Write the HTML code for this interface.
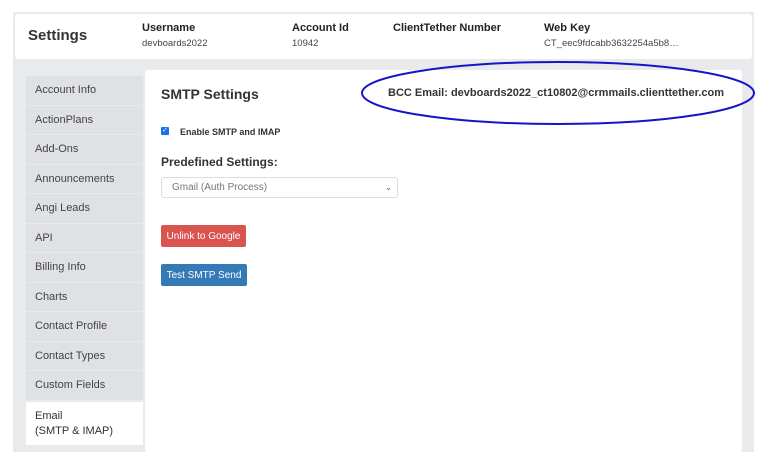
<!DOCTYPE html>
<html><head><meta charset="utf-8"><style>
*{box-sizing:border-box;margin:0;padding:0}
body{width:768px;height:464px;background:#fff;font-family:"Liberation Sans",Arial,sans-serif;position:relative;overflow:hidden;color:#333}
.outer{position:absolute;left:13px;top:12px;width:741px;height:440px;background:#e9eaec}
.header{position:absolute;left:15px;top:14px;width:737px;height:45px;background:#fff;border-radius:3px}
.h1{position:absolute;left:28px;top:27px;font-size:15px;font-weight:bold;color:#333}
.lab{position:absolute;top:22px;font-size:11px;font-weight:bold;color:#222}
.val{position:absolute;top:38px;font-size:9.5px;color:#444}
.side{position:absolute;left:26px;width:117px;background:#dfe1e4;font-size:11px;color:#444;padding-left:9px}
.card{position:absolute;left:145px;top:70px;width:597px;height:382px;background:#fff;border-radius:3px}
.t{position:absolute;font-size:14px;font-weight:bold;color:#333}
.btn{position:absolute;color:#fff;font-size:10px;border-radius:2px;display:flex;align-items:center;justify-content:center}
</style></head><body>
<div class="outer"></div>
<div class="header"></div>
<div class="h1">Settings</div>
<div class="lab" style="left:142px">Username</div><div class="val" style="left:142px">devboards2022</div>
<div class="lab" style="left:292px">Account Id</div><div class="val" style="left:292px">10942</div>
<div class="lab" style="left:393px">ClientTether Number</div>
<div class="lab" style="left:544px">Web Key</div><div class="val" style="left:544px">CT_eec9fdcabb3632254a5b8…</div>

<div class="side" style="top:76px;height:29px;line-height:29px">Account Info</div>
<div class="side" style="top:106px;height:28px;line-height:28px">ActionPlans</div>
<div class="side" style="top:135px;height:29px;line-height:29px">Add-Ons</div>
<div class="side" style="top:165px;height:28px;line-height:28px">Announcements</div>
<div class="side" style="top:194px;height:29px;line-height:29px">Angi Leads</div>
<div class="side" style="top:224px;height:28px;line-height:28px">API</div>
<div class="side" style="top:253px;height:29px;line-height:29px">Billing Info</div>
<div class="side" style="top:283px;height:28px;line-height:28px">Charts</div>
<div class="side" style="top:312px;height:29px;line-height:29px">Contact Profile</div>
<div class="side" style="top:342px;height:28px;line-height:28px">Contact Types</div>
<div class="side" style="top:371px;height:29px;line-height:29px">Custom Fields</div>
<div class="side" style="top:402px;height:43px;background:#fff;padding-top:7px;line-height:15px;color:#333">Email<br>(SMTP &amp; IMAP)</div>

<div class="card"></div>
<div class="t" style="left:161px;top:86px">SMTP Settings</div>
<div style="position:absolute;left:388px;top:87px;font-size:11px;font-weight:bold;color:#333">BCC Email: devboards2022_ct10802@crmmails.clienttether.com</div>
<div style="position:absolute;left:161px;top:127px;width:8px;height:8px;background:#1a73e8;border-radius:1px;color:#fff;font-size:7px;line-height:8px;text-align:center">✓</div>
<div style="position:absolute;left:180px;top:127px;font-size:9px;font-weight:bold;color:#333">Enable SMTP and IMAP</div>
<div class="t" style="left:161px;top:155px;font-size:12px">Predefined Settings:</div>
<div style="position:absolute;left:161px;top:177px;width:237px;height:21px;border:1px solid #ddd;border-radius:3px;font-size:10px;color:#777;padding-left:10px;line-height:19px">Gmail (Auth Process)<span style="position:absolute;right:5px;top:0;font-size:8px;color:#555">⌄</span></div>
<div class="btn" style="left:161px;top:225px;width:85px;height:22px;background:#d9534f">Unlink to Google</div>
<div class="btn" style="left:161px;top:264px;width:86px;height:22px;background:#337ab7">Test SMTP Send</div>

<svg style="position:absolute;left:0;top:0" width="768" height="464"><ellipse cx="558" cy="93" rx="196" ry="31" fill="none" stroke="#1515c8" stroke-width="2"/></svg>
</body></html>
